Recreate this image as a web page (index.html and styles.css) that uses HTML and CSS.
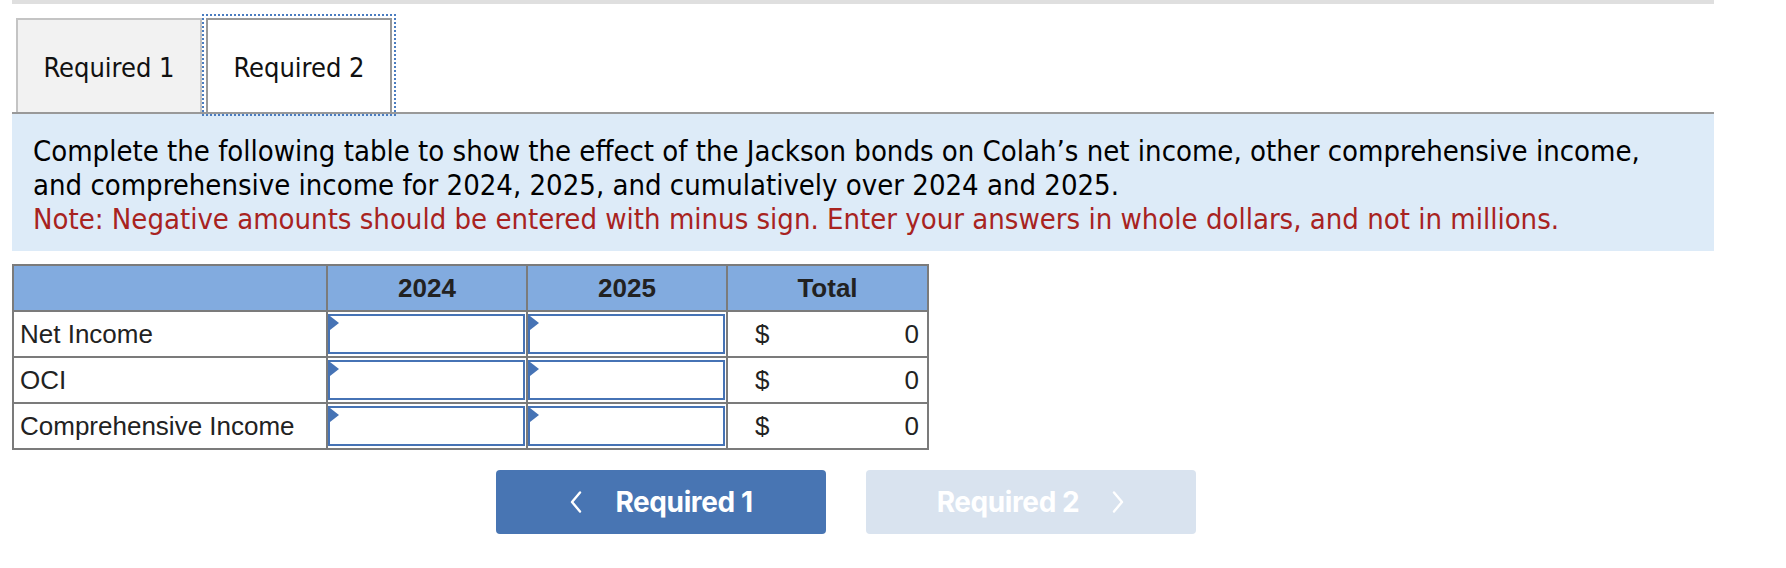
FILE: index.html
```html
<!DOCTYPE html>
<html>
<head>
<meta charset="utf-8">
<link rel="stylesheet" href="styles.css">
</head>
<body>
<div class="page">
  <div class="topbar"></div>
  <div class="tabs">
    <div class="tab">Required 1</div>
    <div class="tab active">Required 2</div>
  </div>
  <div class="panel">
    <p class="desc">Complete the following table to show the effect of the Jackson bonds on Colah’s net income, other comprehensive income,<br>and comprehensive income for 2024, 2025, and cumulatively over 2024 and 2025.</p>
    <p class="note">Note: Negative amounts should be entered with minus sign. Enter your answers in whole dollars, and not in millions.</p>
  </div>
  <table class="grid">
    <colgroup>
      <col class="c-label">
      <col class="c-year">
      <col class="c-year">
      <col class="c-total">
    </colgroup>
    <thead>
      <tr>
        <th></th>
        <th>2024</th>
        <th>2025</th>
        <th>Total</th>
      </tr>
    </thead>
    <tbody>
      <tr>
        <td class="label">Net Income</td>
        <td class="in"><div class="field"></div></td>
        <td class="in"><div class="field"></div></td>
        <td><div class="total"><span>$</span><span>0</span></div></td>
      </tr>
      <tr>
        <td class="label">OCI</td>
        <td class="in"><div class="field"></div></td>
        <td class="in"><div class="field"></div></td>
        <td><div class="total"><span>$</span><span>0</span></div></td>
      </tr>
      <tr>
        <td class="label">Comprehensive Income</td>
        <td class="in"><div class="field"></div></td>
        <td class="in"><div class="field"></div></td>
        <td><div class="total"><span>$</span><span>0</span></div></td>
      </tr>
    </tbody>
  </table>
  <div class="nav">
    <div class="btn prev">
      <svg class="chev" width="14" height="22" viewBox="0 0 14 22"><polyline points="11,1.5 3,11 11,20.5" fill="none" stroke="#fff" stroke-width="2.4" stroke-linecap="round" stroke-linejoin="round"/></svg>
      <span>Required 1</span>
    </div>
    <div class="btn next">
      <span>Required 2</span>
      <svg class="chev" width="14" height="22" viewBox="0 0 14 22"><polyline points="3,1.5 11,11 3,20.5" fill="none" stroke="#fff" stroke-width="2.4" stroke-linecap="round" stroke-linejoin="round"/></svg>
    </div>
  </div>
</div>
</body>
</html>
```

FILE: styles.css
```css
html, body {
  margin: 0;
  padding: 0;
  background: #ffffff;
}

.page {
  width: 1702px;
  margin-left: 12px;
}

.topbar {
  height: 4px;
  background: #dfdfdf;
}

.tabs {
  display: flex;
  align-items: flex-end;
  margin-top: 14px;
  padding-left: 4px;
  border-bottom: 2px solid #999999;
}

.tab {
  box-sizing: border-box;
  width: 186px;
  height: 94px;
  display: flex;
  align-items: center;
  justify-content: center;
  font-family: "DejaVu Sans Condensed", "DejaVu Sans", sans-serif;
  font-stretch: condensed;
  font-size: 27px;
  color: #111111;
  background: #f2f2f2;
  border: 2px solid #c4c4c4;
  border-bottom: none;
  padding-top: 2px;
}

.tab.active {
  margin-left: 4px;
  background: #ffffff;
  border-color: #999999;
  outline: 2px dotted #4a7cc0;
  outline-offset: 2px;
}

.panel {
  background: #ddebf8;
  padding: 20px 21px 15px;
  font-family: "DejaVu Sans Condensed", "DejaVu Sans", sans-serif;
  font-stretch: condensed;
  font-size: 29px;
  line-height: 34px;
}

.desc, .note {
  margin: 0;
  white-space: nowrap;
}

.desc {
  color: #000000;
}

.note {
  color: #a8231f;
}

.grid {
  margin-top: 13px;
  border-collapse: collapse;
  table-layout: fixed;
  width: 915px;
  border: 2px solid #7b7b7b;
  font-family: "Liberation Sans", Arial, sans-serif;
  font-size: 26px;
  color: #222222;
}

.c-label { width: 314px; }
.c-year { width: 200px; }
.c-total { width: 201px; }

.grid th, .grid td {
  border: 2px solid #7b7b7b;
  padding: 0;
}

.grid th {
  height: 44px;
  background: #82abdf;
  font-weight: bold;
  text-align: center;
}

.grid td {
  height: 42px;
}

.grid td.label {
  padding-left: 6px;
  text-align: left;
}

.grid td.in {
  padding: 1px 1px 1px 0;
}

.field {
  position: relative;
  box-sizing: border-box;
  height: 40px;
  border: 2px solid #4673b5;
  background: #ffffff;
}

.field::before {
  content: "";
  position: absolute;
  left: 0;
  top: 0;
  width: 0;
  height: 0;
  border-top: 7px solid transparent;
  border-bottom: 7px solid transparent;
  border-left: 9px solid #4673b5;
}

.total {
  display: flex;
  justify-content: space-between;
  padding-left: 27px;
  padding-right: 8px;
}

.nav {
  display: flex;
  gap: 40px;
  margin-top: 20px;
  padding-left: 484px;
}

.btn {
  box-sizing: border-box;
  width: 330px;
  height: 64px;
  border-radius: 4px;
  display: flex;
  align-items: center;
  justify-content: center;
  gap: 32px;
  font-family: Inter, Roboto, "Liberation Sans", sans-serif;
  font-weight: bold;
  font-size: 28px;
  color: #ffffff;
  letter-spacing: -0.4px;
}

.btn.prev {
  background: #4875b3;
}

.btn.next {
  background: #d9e3ef;
}

.chev {
  display: block;
}
```
